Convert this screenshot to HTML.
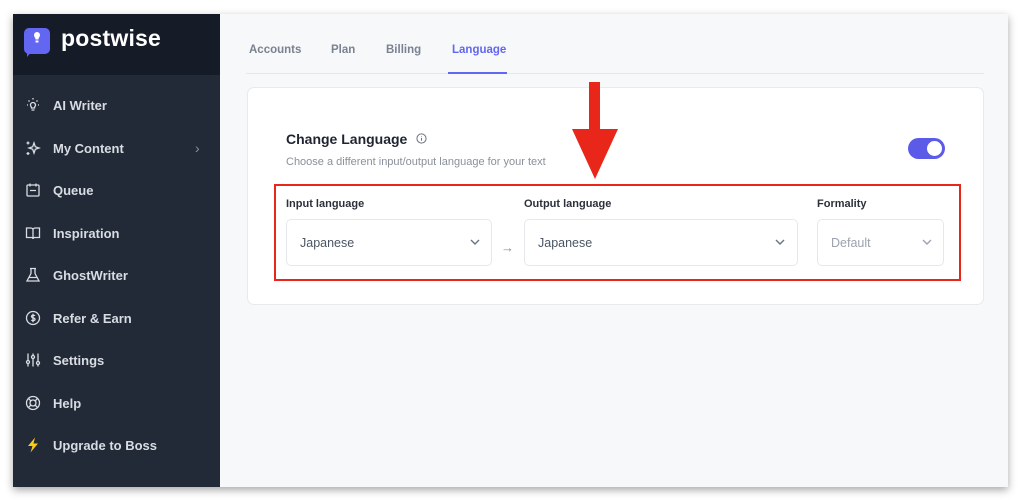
<!DOCTYPE html>
<html><head><meta charset="utf-8"><style>
*{box-sizing:border-box;margin:0;padding:0}
body{width:1024px;height:502px;background:#fff;font-family:"Liberation Sans",sans-serif;position:relative;overflow:hidden}
.frame{position:absolute;left:13px;top:14px;width:995px;height:473px;box-shadow:0 3px 8px rgba(0,0,0,.35);background:#f7f8fa}
.side{position:absolute;left:0;top:0;width:207px;height:473px;background:#222a37}
.head{position:absolute;left:0;top:0;width:207px;height:61px;background:#151b27}
.logo{position:absolute;left:11px;top:14px;width:26px;height:26px;background:#6366f1;border-radius:5px}
.brand{position:absolute;left:48px;top:11px;color:#fff;font-size:23px;font-weight:bold;letter-spacing:.2px}
.item{position:absolute;left:40px;color:#d9dde3;font-size:13px;font-weight:bold}
.ic{position:absolute;left:12px;width:16px;height:16px}
.tab{position:absolute;top:30px;font-size:11.5px;font-weight:bold;color:#7a8290}
.card{position:absolute;left:234px;top:73px;width:737px;height:218px;background:#fff;border:1px solid #e8eaee;border-radius:7px}
.lbl{position:absolute;font-size:11px;font-weight:bold;color:#2b303a}
.sel{position:absolute;height:47px;border:1px solid #e6e8ec;border-radius:5px;background:#fff;font-size:12.5px;color:#4b5563}
.sel span{position:absolute;left:13px;top:16px}
.sel svg{position:absolute;top:19px}
</style></head><body>
<div class="frame">
<div class="side">
<div class="head">
<div class="logo"><svg width="26" height="26" viewBox="0 0 26 26"><path d="M10 7a3 3 0 1 1 6 0c0 2-1.5 2.5-1.5 4.5h-3C11.5 9.5 10 9 10 7z" fill="#fff"/><rect x="11.5" y="12.5" width="3" height="2" fill="#fff"/></svg></div>
<div style="position:absolute;left:14px;top:37px;width:0;height:0;border-left:5px solid #6366f1;border-bottom:6px solid transparent"></div>
<div class="brand">postwise</div>
</div>
<svg class="ic" style="top:83px" viewBox="0 0 16 16" fill="none" stroke="#d9dde3" stroke-width="1.3"><path d="M5.5 8a2.5 2.5 0 1 1 5 0c0 1.2-1 1.6-1 3h-3c0-1.4-1-1.8-1-3zM6.5 13h3M8 1v1.5M2 8h1M13 8h1M3.5 3.5l1 1M12.5 3.5l-1 1"/></svg>
<div class="item" style="top:84px">AI Writer</div>
<svg class="ic" style="top:126px" viewBox="0 0 16 16" fill="none" stroke="#d9dde3" stroke-width="1.3"><path d="M9 3l1.3 3.7L14 8l-3.7 1.3L9 13l-1.3-3.7L4 8l3.7-1.3z"/><path d="M3 1.5v3M1.5 3h3M3 12v3M1.5 13.5h3"/></svg>
<div class="item" style="top:127px">My Content</div>
<div style="position:absolute;left:182px;top:126px;color:#8a919c;font-size:14px">›</div>
<svg class="ic" style="top:168px" viewBox="0 0 16 16" fill="none" stroke="#d9dde3" stroke-width="1.3"><rect x="2" y="3" width="12" height="11" rx="1"/><path d="M5 1.5v3M11 1.5v3M5 8.5h6"/></svg>
<div class="item" style="top:169px">Queue</div>
<svg class="ic" style="top:211px" viewBox="0 0 16 16" fill="none" stroke="#d9dde3" stroke-width="1.3"><path d="M1.5 3h4.5a2 2 0 0 1 2 2v9a1.5 1.5 0 0 0-1.5-1.5h-5zM14.5 3H10a2 2 0 0 0-2 2v9a1.5 1.5 0 0 1 1.5-1.5h5z"/></svg>
<div class="item" style="top:212px">Inspiration</div>
<svg class="ic" style="top:253px" viewBox="0 0 16 16" fill="none" stroke="#d9dde3" stroke-width="1.3"><path d="M5 1.5h6M6 1.5v5L2 14h12l-4-7.5v-5M4 10.5h8"/></svg>
<div class="item" style="top:254px">GhostWriter</div>
<svg class="ic" style="top:296px" viewBox="0 0 16 16" fill="none" stroke="#d9dde3" stroke-width="1.3"><circle cx="8" cy="8" r="6.5"/><path d="M10 5.8c-.5-.7-3.5-1-3.5.7s3.5 1 3.5 2.8-3 1.5-3.7.7M8 3.8v8.4"/></svg>
<div class="item" style="top:297px">Refer &amp; Earn</div>
<svg class="ic" style="top:338px" viewBox="0 0 16 16" fill="none" stroke="#d9dde3" stroke-width="1.3"><path d="M3 1.5v13M8 1.5v13M13 1.5v13"/><circle cx="3" cy="10" r="1.5" fill="#222a37"/><circle cx="8" cy="5" r="1.5" fill="#222a37"/><circle cx="13" cy="11" r="1.5" fill="#222a37"/></svg>
<div class="item" style="top:339px">Settings</div>
<svg class="ic" style="top:381px" viewBox="0 0 16 16" fill="none" stroke="#d9dde3" stroke-width="1.3"><circle cx="8" cy="8" r="6.5"/><circle cx="8" cy="8" r="3"/><path d="M3.5 3.5l2.4 2.4M12.5 3.5l-2.4 2.4M3.5 12.5l2.4-2.4M12.5 12.5l-2.4-2.4"/></svg>
<div class="item" style="top:382px">Help</div>
<svg class="ic" style="top:423px" viewBox="0 0 16 16"><path d="M10 0.5L3 9h4.5L5.5 15.5 13 6.5H8.5z" fill="#facc15"/></svg>
<div class="item" style="top:424px">Upgrade to Boss</div>
</div>
<div class="tab" style="left:236px">Accounts</div>
<div class="tab" style="left:318px">Plan</div>
<div class="tab" style="left:373px">Billing</div>
<div class="tab" style="left:439px;color:#6366f1">Language</div>
<div style="position:absolute;left:233px;top:59px;width:738px;height:1px;background:#e5e7eb"></div>
<div style="position:absolute;left:435px;top:58px;width:59px;height:2px;background:#6366f1"></div>
<div class="card"></div>
<div style="position:absolute;left:273px;top:117px;font-size:14px;font-weight:bold;color:#1f2430">Change Language</div>
<svg style="position:absolute;left:403px;top:119px" width="11" height="11" viewBox="0 0 12 12" fill="none" stroke="#6b7280" stroke-width="1.1"><circle cx="6" cy="6" r="5"/><path d="M6 5.3v3.2M6 3.3v.5"/></svg>
<div style="position:absolute;left:273px;top:142px;font-size:11px;color:#8a909a">Choose a different input/output language for your text</div>
<div style="position:absolute;left:895px;top:124px;width:37px;height:21px;border-radius:11px;background:#5b5be8"><div style="position:absolute;right:3px;top:3px;width:15px;height:15px;border-radius:50%;background:#fff"></div></div>
<div style="position:absolute;left:261px;top:170px;width:687px;height:97px;border:2px solid #e8261a"></div>
<div class="lbl" style="left:273px;top:184px">Input language</div>
<div class="lbl" style="left:511px;top:184px">Output language</div>
<div class="lbl" style="left:804px;top:184px">Formality</div>
<div class="sel" style="left:273px;top:205px;width:206px"><span>Japanese</span><svg style="left:183px" width="10" height="7" viewBox="0 0 10 7" fill="none" stroke="#6b7280" stroke-width="1.4"><path d="M1 1l4 4 4-4"/></svg></div>
<div style="position:absolute;left:488px;top:226px;color:#8a909a;font-size:13px">→</div>
<div class="sel" style="left:511px;top:205px;width:274px"><span>Japanese</span><svg style="left:250px" width="10" height="7" viewBox="0 0 10 7" fill="none" stroke="#6b7280" stroke-width="1.4"><path d="M1 1l4 4 4-4"/></svg></div>
<div class="sel" style="left:804px;top:205px;width:127px;color:#9ca3af"><span>Default</span><svg style="left:104px" width="10" height="7" viewBox="0 0 10 7" fill="none" stroke="#9ca3af" stroke-width="1.4"><path d="M1 1l4 4 4-4"/></svg></div>
</div>
<svg style="position:absolute;left:570px;top:82px" width="50" height="98" viewBox="0 0 50 98"><rect x="19" y="0" width="11" height="50" fill="#e8261a"/><path d="M2 47h46L25 97z" fill="#e8261a"/></svg>
</body></html>
